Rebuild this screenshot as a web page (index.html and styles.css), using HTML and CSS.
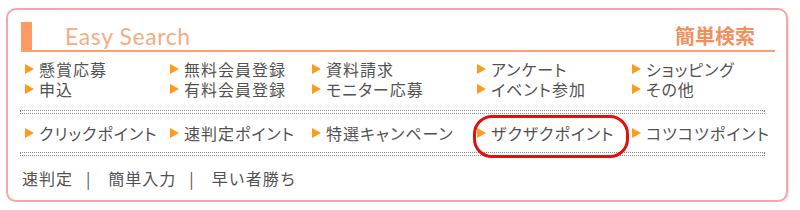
FILE: index.html
```html
<!DOCTYPE html>
<html lang="ja">

<head>
    <meta charset="UTF-8">
    <title>Easy Search</title>
    <link rel="stylesheet" href="styles.css">
</head>

<body>
    <div class="search-box">
        <div class="search-head">
            <span class="head-mark"></span>
            <span class="head-title">Easy Search</span>
            <span class="head-jp">簡単検索</span>
        </div>

        <ul class="link-grid">
            <li>懸賞応募</li>
            <li>無料会員登録</li>
            <li>資料請求</li>
            <li>アンケート</li>
            <li>ショッピング</li>
            <li>申込</li>
            <li>有料会員登録</li>
            <li>モニター応募</li>
            <li>イベント参加</li>
            <li>その他</li>
        </ul>

        <div class="dots"></div>

        <ul class="link-grid single">
            <li>クリックポイント</li>
            <li>速判定ポイント</li>
            <li>特選キャンペーン</li>
            <li class="marked">ザクザクポイント</li>
            <li>コツコツポイント</li>
        </ul>

        <div class="dots"></div>

        <p class="quick">
            <span>速判定</span><span class="bar">|</span><span>簡単入力</span><span class="bar">|</span><span>早い者勝ち</span>
        </p>
    </div>
</body>

</html>
```

FILE: styles.css
```css
* {
    margin: 0;
    padding: 0;
    box-sizing: border-box;
}

body {
    background-color: #fff;
    font-family: "Noto Sans CJK JP", "Noto Sans", sans-serif;
    color: #525252;
}

.search-box {
    margin: 8px 0 0 6px;
    width: 782px;
    height: 194px;
    border: 2px solid #f6a6a6;
    border-radius: 10px;
    box-shadow: 1px 1px 2px rgba(240, 150, 150, 0.35);
    padding: 12px 11px 0 0;
}

.search-head {
    display: flex;
    align-items: center;
    height: 30px;
    margin-left: 13px;
    border-bottom: 2px solid #ff9f6e;
}

.head-mark {
    width: 11px;
    height: 28px;
    background-color: #ff9a66;
}

.head-title {
    margin-left: 33px;
    font-family: Lato, "DejaVu Sans", sans-serif;
    font-size: 23px;
    letter-spacing: 0.6px;
    color: #f7ab84;
    line-height: 28px;
}

.head-jp {
    margin-left: auto;
    margin-right: 20px;
    font-size: 20px;
    font-weight: bold;
    color: #f28f5c;
    line-height: 28px;
}

.link-grid {
    list-style: none;
    display: grid;
    grid-template-columns: 145px 142px 165px 155px 1fr;
    margin: 7px 0 0 17px;
}

.link-grid.single {
    margin-top: 9px;
}

.link-grid li {
    display: flex;
    align-items: center;
    height: 20px;
    font-size: 16px;
    letter-spacing: 1px;
    font-feature-settings: "palt";
    white-space: nowrap;
}

.link-grid li::before {
    content: "";
    width: 0;
    height: 0;
    border-left: 9px solid #ff9a1a;
    border-top: 5px solid transparent;
    border-bottom: 5px solid transparent;
    margin-right: 5px;
}

.marked {
    position: relative;
}

.marked::after {
    content: "";
    position: absolute;
    left: -4px;
    top: -8px;
    width: 150px;
    height: 37px;
    border: 3px solid #e01010;
    border-radius: 19px;
}

.dots {
    margin: 11px 10px 0 12px;
    height: 4px;
    border: 1px dotted #8a8a8a;
}

.link-grid.single + .dots {
    margin-top: 9px;
}

.quick {
    margin: 12px 0 0 14px;
    font-size: 16px;
    line-height: 20px;
    letter-spacing: 1px;
}

.quick .bar {
    margin: 0 17px 0 13px;
}
```
